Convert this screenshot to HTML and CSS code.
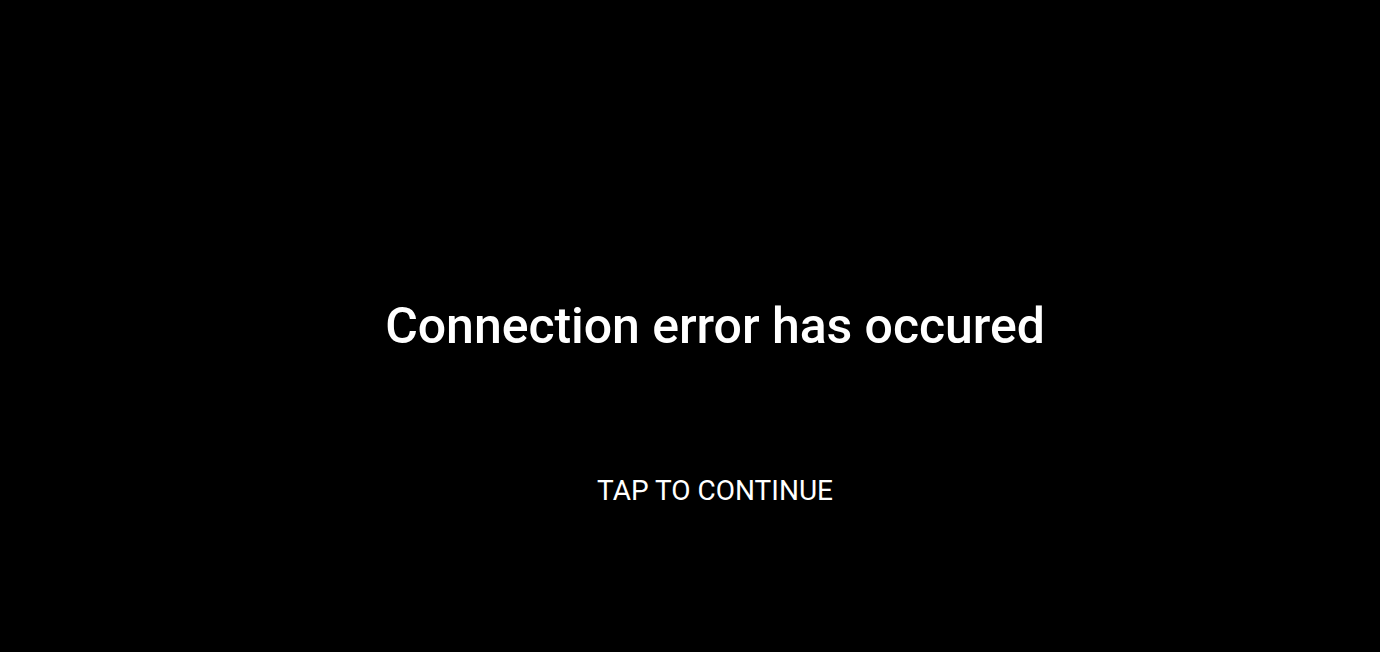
FILE: index.html
```html
<!DOCTYPE html>
<html lang="en">
<head>
<meta charset="utf-8">
<title>Connection error</title>
<link rel="stylesheet" href="styles.css">
</head>
<body>
<main class="screen">
  <h1 class="message">Connection error has occured</h1>
  <button class="continue" type="button">TAP TO CONTINUE</button>
</main>
</body>
</html>
```
FILE: styles.css
```css
html, body {
  margin: 0;
  padding: 0;
  background: #000;
  height: 100%;
}
.screen {
  box-sizing: border-box;
  height: 652px;
  padding-left: 50px;
  padding-top: 293px;
  display: flex;
  flex-direction: column;
  align-items: center;
  font-family: Roboto, "Liberation Sans", sans-serif;
  color: #fff;
}
.message {
  margin: 0;
  font-size: 50px;
  font-weight: 500;
  line-height: 66px;
  letter-spacing: -0.05px;
}
.continue {
  margin-top: 115px;
  background: transparent;
  border: none;
  color: #fff;
  font-family: Roboto, "Liberation Sans", sans-serif;
  font-size: 28px;
  font-weight: 400;
  line-height: 34px;
  padding: 0;
  letter-spacing: 0;
}
```
